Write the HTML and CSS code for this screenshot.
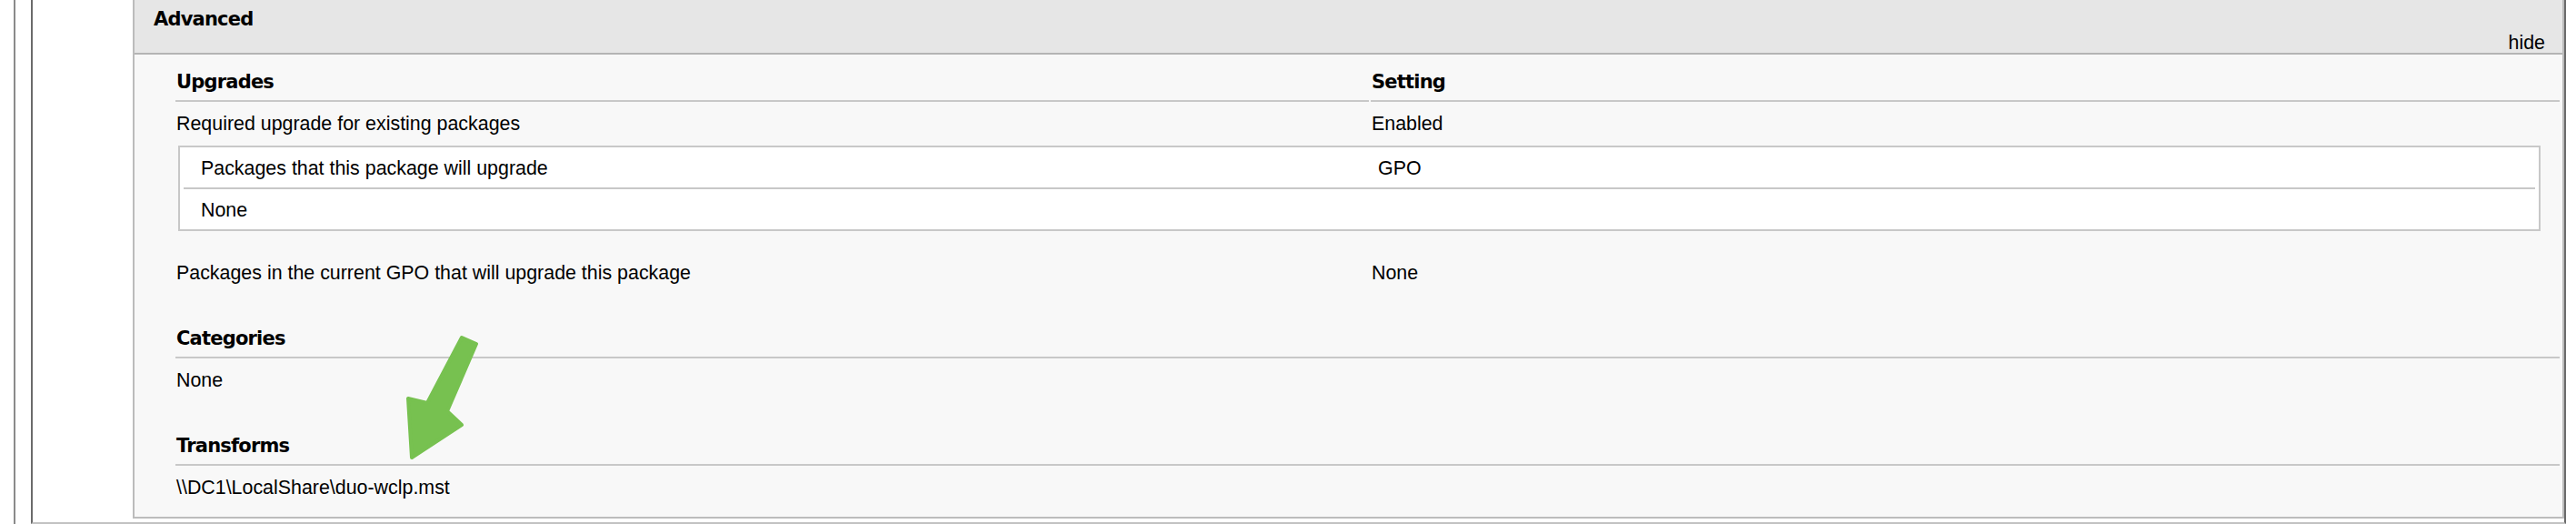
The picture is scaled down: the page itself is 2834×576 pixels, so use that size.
FILE: index.html
```html
<!DOCTYPE html>
<html lang="en">

<head>
  <meta charset="utf-8">
  <title>Advanced</title>
  <link rel="stylesheet" href="styles.css">
</head>

<body>
  <div class="win">
    <div class="edge"></div>
    <div class="frame">
      <div class="panel">
        <div class="head">
          <span class="title">Advanced</span>
          <span class="hide">hide</span>
        </div>
        <div class="body">

          <div class="sect">
            <div class="grid">
              <div class="th">Upgrades</div>
              <div class="th">Setting</div>
              <div class="td">Required upgrade for existing packages</div>
              <div class="td">Enabled</div>
            </div>
            <div class="box">
              <div class="brow sep">
                <div class="bc">Packages that this package will upgrade</div>
                <div class="bc2">GPO</div>
              </div>
              <div class="brow">
                <div class="bc">None</div>
                <div class="bc2"></div>
              </div>
            </div>
            <div class="grid after-box">
              <div class="td">Packages in the current GPO that will upgrade this package</div>
              <div class="td">None</div>
            </div>
          </div>

          <div class="sect">
            <div class="th full">Categories</div>
            <div class="td full">None</div>
          </div>

          <div class="sect">
            <div class="th full">Transforms</div>
            <div class="td full">\\DC1\LocalShare\duo-wclp.mst</div>
          </div>

        </div>
      </div>
    </div>
  </div>

  <svg class="arrow" width="100" height="160" viewBox="0 0 100 160">
    <path d="M68 11 L30 83 L9 78 L13 143 L68 107 L52 92 L84 18 Z" />
  </svg>
</body>

</html>
```

FILE: styles.css
```css
body {
  margin: 0;
  background: #fff;
  font-family: "Liberation Sans", Arial, sans-serif;
  font-size: 21.4px;
  color: #000;
}

.win {
  display: flex;
  width: 2834px;
  height: 576px;
  overflow: hidden;
}

.edge {
  width: 2px;
  margin-left: 15px;
  background: #8a8a8a;
}

.frame {
  box-sizing: border-box;
  width: 2789px;
  height: 576px;
  margin-left: 17px;
  padding-left: 110px;
  border-left: 2px solid #6b6b6b;
  border-right: 2px solid #6b6b6b;
  border-bottom: 2px solid #c2c2c2;
}

.panel {
  box-sizing: border-box;
  width: 2675px;
  height: 570px;
  background: #f8f8f8;
  border-left: 2px solid #bcbcbc;
  border-right: 2px solid #bcbcbc;
  border-bottom: 2px solid #bcbcbc;
}

.head {
  display: flex;
  justify-content: space-between;
  height: 58px;
  padding: 0 19px 0 21px;
  background: #e6e6e6;
  border-bottom: 2px solid #b4b4b4;
}

.title {
  align-self: flex-start;
  padding-top: 8px;
  line-height: 26px;
  font-family: "DejaVu Sans", sans-serif;
  font-size: 21px;
  font-weight: 700;
  letter-spacing: -0.8px;
}

.hide {
  align-self: flex-end;
  line-height: 22px;
}

.body {
  padding: 17px 3px 0 45px;
}

.sect + .sect {
  margin-top: 35px;
}

.grid {
  display: grid;
  grid-template-columns: 1313px 1fr;
  column-gap: 2px;
}

.th {
  padding: 0 1px 7px;
  line-height: 26px;
  font-family: "DejaVu Sans", sans-serif;
  font-size: 21px;
  font-weight: 700;
  letter-spacing: -0.8px;
  border-bottom: 2px solid #c8c8c8;
}

.td {
  padding: 11px 1px;
  line-height: 26px;
  white-space: nowrap;
}

.after-box {
  margin-top: 22px;
}

.box {
  margin: 0 21px 0 3px;
  padding: 0 4px;
  background: #fff;
  border: 2px solid #c8c8c8;
}

.brow {
  display: flex;
  padding: 10px 0 8px;
  line-height: 26px;
}

.brow.sep {
  border-bottom: 2px solid #c8c8c8;
}

.bc {
  box-sizing: border-box;
  width: 1314px;
  padding-left: 19px;
  white-space: nowrap;
}

.bc2 {
  flex: 1;
}

.arrow {
  position: absolute;
  left: 440px;
  top: 360px;
  overflow: visible;
}

.arrow path {
  fill: #77c150;
  stroke: #77c150;
  stroke-width: 4;
  stroke-linejoin: round;
}
```
